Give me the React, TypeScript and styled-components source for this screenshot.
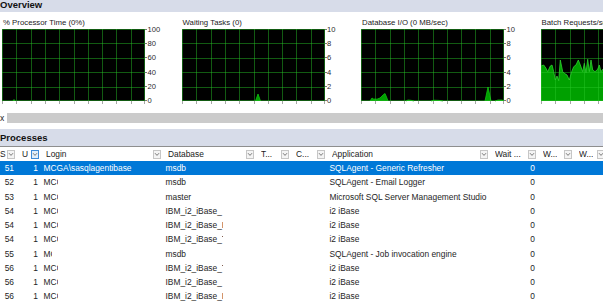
import React from "react";
import styled, { createGlobalStyle } from "styled-components";

const GlobalStyle = createGlobalStyle`
  html, body {
    margin: 0;
    padding: 0;
    background: #fff;
  }
  body {
    font-family: "Liberation Sans", Arial, sans-serif;
    overflow: hidden;
  }
`;

const Page = styled.div`
  width: 603px;
  height: 306px;
  overflow: hidden;
  background: #fff;
  color: #1b1b1b;
  display: flex;
  flex-direction: column;
`;

const Band = styled.div<{ $h: number }>`
  flex-shrink: 0;
  height: ${(p) => p.$h}px;
  background: #d7dce9;
  display: flex;
  align-items: center;
  font-size: 9.5px;
  font-weight: bold;
  color: #111;
  white-space: nowrap;
`;

const OverviewBand = styled(Band)`
  align-items: flex-start;
  line-height: 9px;
`;

const ChartsRow = styled.div`
  flex-shrink: 0;
  display: flex;
  box-sizing: border-box;
  padding-top: 5px;
  height: 101px;
  overflow: hidden;
`;

const ChartPanel = styled.div`
  flex-shrink: 0;
  width: 179.5px;
  padding-left: 2px;
  box-sizing: border-box;
  display: flex;
  flex-direction: column;
`;

const ChartTitle = styled.div`
  height: 12px;
  line-height: 12px;
  font-size: 7.8px;
  padding-left: 1px;
  white-space: nowrap;
`;

const ChartBody = styled.div`
  display: flex;
  align-items: flex-start;
`;

const ChartSvg = styled.svg`
  display: block;
  flex-shrink: 0;
`;

const Axis = styled.div`
  height: 72px;
  display: flex;
  flex-direction: column;
  justify-content: space-between;
`;

const AxisLabel = styled.div`
  height: 0;
  display: flex;
  align-items: center;
  font-size: 7.6px;
  color: #2a2a2a;
  white-space: nowrap;

  &::before {
    content: "";
    width: 2px;
    height: 1px;
    margin-right: 0.5px;
    background: #777;
  }
`;

const SplitRow = styled.div`
  flex-shrink: 0;
  height: 10px;
  display: flex;
  align-items: center;
`;

const SplitLabel = styled.span`
  width: 7px;
  font-size: 8.5px;
  line-height: 10px;
  flex-shrink: 0;
`;

const SplitBar = styled.div`
  flex: 1;
  height: 10px;
  background: #cbcbcb;
`;

const ProcessesBand = styled(Band)`
  margin-top: 6px;
`;

const COLS = "22px 24px 122px 93px 35px 36px 163px 48px 36px 33px";

const Table = styled.div`
  margin-left: -6px;
  display: flex;
  flex-direction: column;
  font-size: 8.4px;
`;

const HeaderRow = styled.div`
  display: grid;
  grid-template-columns: ${COLS};
  height: 14px;
  border-top: 1px solid #8e8e8e;
  background: #fff;
`;

const HeaderCell = styled.div`
  display: flex;
  align-items: center;
  justify-content: space-between;
  padding: 0 1px 0 6px;
  overflow: hidden;
  color: #1a1a1a;
`;

const HeaderText = styled.span`
  white-space: nowrap;
  overflow: hidden;
`;

const FilterBtn = styled.span<{ $active?: boolean }>`
  flex-shrink: 0;
  width: 8px;
  height: 9px;
  box-sizing: border-box;
  border: 1px solid ${(p) => (p.$active ? "#3f8ad8" : "#c6c6c6")};
  background: ${(p) => (p.$active ? "#e1eefa" : "#f4f4f4")};
  display: flex;
  align-items: center;
  justify-content: center;
`;

const Row = styled.div<{ $selected?: boolean }>`
  display: grid;
  grid-template-columns: ${COLS};
  height: 14.25px;
  line-height: 14.25px;
  background: ${(p) => (p.$selected ? "#0078d7" : "#fff")};
  color: ${(p) => (p.$selected ? "#fff" : "#1e1e1e")};
`;

const Cell = styled.div<{ $num?: boolean }>`
  white-space: nowrap;
  overflow: hidden;
  text-align: ${(p) => (p.$num ? "right" : "left")};
  padding: ${(p) => (p.$num ? "0 2px 0 0" : "0 0 0 3.5px")};
`;

const Tail = styled.span`
  display: inline-block;
  width: 1.5px;
  overflow: hidden;
  vertical-align: top;
`;

const Chevron = () => (
  <svg width="6" height="5" viewBox="0 0 6 5">
    <polyline points="1,1.2 3,3.4 5,1.2" fill="none" stroke="#6a6a6a" strokeWidth="0.9" />
  </svg>
);

type Pt = [number, number];

const CW = 143;
const CH = 72;

const batch: Pt[] = [
  [0, 37], [2.7, 36], [5, 39.3], [6.7, 42.7], [9.3, 37], [11, 36], [12.7, 42.7],
  [14.3, 51], [16, 47], [17.7, 51.7], [19.3, 31], [21.7, 42.7], [23.3, 44.3],
  [26, 46], [28.3, 51], [30.7, 42.7], [32.7, 37.7], [35, 36], [37.3, 31],
  [39.3, 36], [41.7, 42.7], [43.3, 34.3], [45, 43.7], [46.7, 30.3], [48.3, 42.7],
  [50, 31], [51.7, 41], [54, 42.7], [56.7, 40.3], [58.3, 36], [60, 42.7],
  [62, 40], [64, 38], [67, 44], [70, 35], [73, 41], [76, 33], [79, 45], [82, 39],
  [85, 36], [88, 47], [91, 34], [94, 40], [97, 43], [100, 31], [103, 42], [106, 38],
  [109, 45], [112, 36], [115, 40], [118, 33], [121, 44], [124, 39], [127, 37],
  [130, 46], [133, 35], [136, 41], [139, 38], [143, 40],
];

const charts: { title: string; labels: string[]; series: Pt[][]; stroke?: boolean }[] = [
  {
    title: "% Processor Time (0%)",
    labels: ["100", "80", "60", "40", "20", "0"],
    series: [[[11, 72], [12, 70.5], [13, 72]]],
  },
  {
    title: "Waiting Tasks (0)",
    labels: ["10", "8", "6", "4", "2", "0"],
    series: [[[73.5, 72], [76, 65], [78.5, 72]]],
  },
  {
    title: "Database I/O (0 MB/sec)",
    labels: ["10", "8", "6", "4", "2", "0"],
    series: [
      [[9, 72], [11, 69], [12.5, 70], [16, 70.2], [19, 69], [22, 66], [24, 64.5], [25.5, 68], [27, 72]],
      [[124, 72], [127, 58], [130, 72]],
      [[45, 72], [47, 71], [50, 71.3], [53, 72]],
      [[70, 72], [73, 71.2], [78, 71.4], [82, 72]],
      [[134, 72], [137, 71], [141, 71], [143, 72]],
    ],
  },
  {
    title: "Batch Requests/sec (25/sec)",
    labels: ["100", "80", "60", "40", "20", "0"],
    series: [batch],
    stroke: true,
  },
];

const Chart = ({ series, stroke }: { series: Pt[][]; stroke?: boolean }) => {
  const cols = Array.from({ length: 11 }, (_, i) => Math.min(CW - 0.5, Math.round((i * CW) / 10) + 0.5));
  const rows = Array.from({ length: 6 }, (_, i) => Math.min(CH - 0.5, Math.round((i * CH) / 5) + 0.5));
  return (
    <ChartSvg width={CW} height={CH + 4} viewBox={`0 0 ${CW} ${CH + 4}`}>
      <rect width={CW} height={CH} fill="#000" />
      {series.map((s, i) => {
        const line = s.map(([x, y]) => `${x},${y}`).join(" ");
        const area = `${s[0][0]},${CH} ${line} ${s[s.length - 1][0]},${CH}`;
        return (
          <g key={i}>
            <polygon points={area} fill="#00a000" />
            <polyline points={line} fill="none" stroke={stroke ? "#30d030" : "#10c010"} strokeWidth="0.8" />
          </g>
        );
      })}
      {cols.map((x) => (
        <line key={`c${x}`} x1={x} x2={x} y1={0} y2={CH} stroke="rgba(40,200,40,0.45)" strokeWidth="1" />
      ))}
      {rows.map((y) => (
        <line key={`r${y}`} x1={0} x2={CW} y1={y} y2={y} stroke="rgba(40,200,40,0.45)" strokeWidth="1" />
      ))}
      {cols.map((x) => (
        <line key={`t${x}`} x1={x} x2={x} y1={CH} y2={CH + 3} stroke="#a6a6a6" strokeWidth="1" />
      ))}
    </ChartSvg>
  );
};

const headers: { label: string; active?: boolean }[] = [
  { label: "S" },
  { label: "U", active: true },
  { label: "Login" },
  { label: "Database" },
  { label: "T..." },
  { label: "C..." },
  { label: "Application" },
  { label: "Wait ..." },
  { label: "W..." },
  { label: "W..." },
];

type Proc = {
  spid: string;
  login: string;
  loginTail?: string;
  db: string;
  dbTail?: string;
  app: string;
  selected?: boolean;
};

const processes: Proc[] = [
  { spid: "51", login: "MCGA\\sasqlagentibase", db: "msdb", app: "SQLAgent - Generic Refresher", selected: true },
  { spid: "52", login: "MC", loginTail: "G", db: "msdb", app: "SQLAgent - Email Logger" },
  { spid: "53", login: "MC", loginTail: "G", db: "master", app: "Microsoft SQL Server Management Studio" },
  { spid: "54", login: "MC", loginTail: "G", db: "IBM_i2_iBase_", app: "i2 iBase" },
  { spid: "54", login: "MC", loginTail: "G", db: "IBM_i2_iBase_", dbTail: "I", app: "i2 iBase" },
  { spid: "54", login: "MC", loginTail: "G", db: "IBM_i2_iBase_", dbTail: "T", app: "i2 iBase" },
  { spid: "55", login: "M", loginTail: "C", db: "msdb", app: "SQLAgent - Job invocation engine" },
  { spid: "56", login: "MC", loginTail: "G", db: "IBM_i2_iBase_", dbTail: "T", app: "i2 iBase" },
  { spid: "56", login: "MC", loginTail: "G", db: "IBM_i2_iBase_", app: "i2 iBase" },
  { spid: "56", login: "MC", loginTail: "G", db: "IBM_i2_iBase_", dbTail: "I", app: "i2 iBase" },
];

const App = () => {
  return (
    <Page>
      <GlobalStyle />
      <OverviewBand $h={12}>Overview</OverviewBand>
      <ChartsRow>
        {charts.map((c) => (
          <ChartPanel key={c.title}>
            <ChartTitle>{c.title}</ChartTitle>
            <ChartBody>
              <Chart series={c.series} stroke={c.stroke} />
              <Axis>
                {c.labels.map((l) => (
                  <AxisLabel key={l}>{l}</AxisLabel>
                ))}
              </Axis>
            </ChartBody>
          </ChartPanel>
        ))}
      </ChartsRow>
      <SplitRow>
        <SplitLabel>x</SplitLabel>
        <SplitBar />
      </SplitRow>
      <ProcessesBand $h={17}>Processes</ProcessesBand>
      <Table>
        <HeaderRow>
          {headers.map((h, i) => (
            <HeaderCell key={i}>
              <HeaderText>{h.label}</HeaderText>
              <FilterBtn $active={h.active}>
                <Chevron />
              </FilterBtn>
            </HeaderCell>
          ))}
        </HeaderRow>
        {processes.map((p, i) => (
          <Row key={i} $selected={p.selected}>
            <Cell $num>{p.spid}</Cell>
            <Cell $num>1</Cell>
            <Cell>
              {p.login}
              {p.loginTail && <Tail>{p.loginTail}</Tail>}
            </Cell>
            <Cell>
              {p.db}
              {p.dbTail && <Tail>{p.dbTail}</Tail>}
            </Cell>
            <Cell />
            <Cell />
            <Cell>{p.app}</Cell>
            <Cell $num>0</Cell>
            <Cell />
            <Cell />
          </Row>
        ))}
      </Table>
    </Page>
  );
};

export default App;
